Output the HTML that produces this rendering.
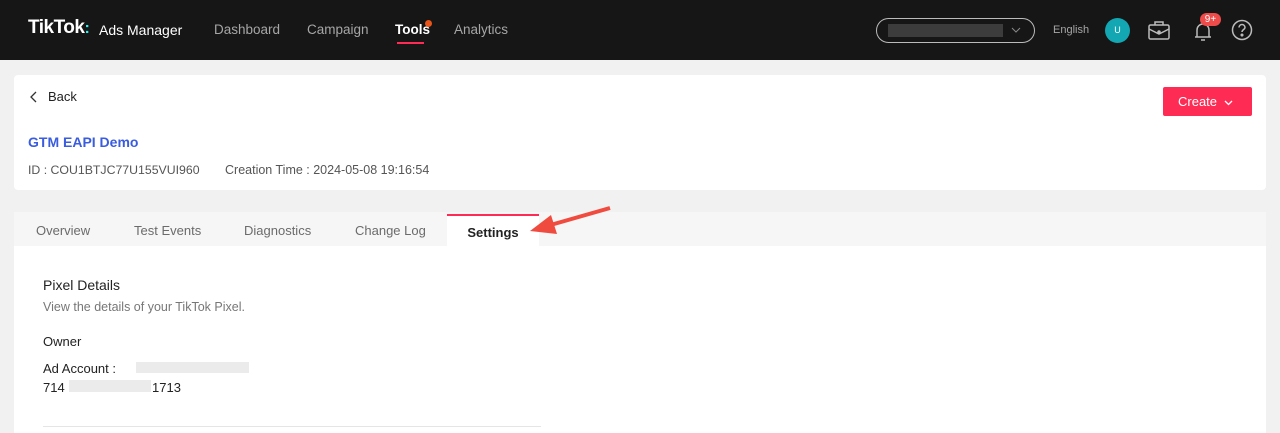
<!DOCTYPE html>
<html><head><meta charset="utf-8"><style>
*{box-sizing:border-box;margin:0;padding:0}
html,body{width:1280px;height:433px;overflow:hidden}
body{background:#f1f1f1;font-family:"Liberation Sans",Arial,sans-serif;position:relative}
.hdr{position:absolute;left:0;top:0;width:1280px;height:60px;background:#161616}
.abs{position:absolute}
.nav{color:#a6a6a6;font-size:13.5px;top:22px}
.card{position:absolute;left:14px;top:75px;width:1252px;height:115px;background:#fff;border-radius:4px}
.tabs{position:absolute;left:14px;top:212px;width:1252px;height:34px;background:#f6f6f6}
.tab{position:absolute;top:11px;font-size:13px;color:#6b6b6b}
.content{position:absolute;left:14px;top:246px;width:1252px;height:187px;background:#fff}
</style></head><body>
<div class="hdr">
 <div class="abs" style="left:28px;top:17px;color:#fff;font-weight:bold;font-size:19px;letter-spacing:-0.5px">TikTok<span style="color:#25f4ee;font-size:16px">:</span></div>
 <div class="abs" style="left:99px;top:22px;color:#fff;font-size:14px">Ads Manager</div>
 <div class="abs nav" style="left:214px">Dashboard</div>
 <div class="abs nav" style="left:307px">Campaign</div>
 <div class="abs nav" style="left:395px;color:#fff;font-weight:bold">Tools</div>
 <div class="abs" style="left:425px;top:20px;width:7px;height:7px;border-radius:50%;background:#e8541a"></div>
 <div class="abs" style="left:397px;top:42px;width:27px;height:2px;background:#fe2c55"></div>
 <div class="abs nav" style="left:454px">Analytics</div>
 <div class="abs" style="left:876px;top:18px;width:159px;height:25px;border:1px solid #bbb;border-radius:13px"></div>
 <div class="abs" style="left:888px;top:24px;width:115px;height:13px;background:#3c3c3c"></div>
 <svg class="abs" style="left:1011px;top:26px" width="10" height="8"><path d="M1 2l4 4 4-4" stroke="#888" fill="none"/></svg>
 <div class="abs" style="left:1053px;top:24px;color:#a6a6a6;font-size:11px">English</div>
 <div class="abs" style="left:1105px;top:18px;width:25px;height:25px;border-radius:50%;background:#12a7b3;color:#fff;font-size:9px;text-align:center;line-height:25px">U</div>
 <svg class="abs" style="left:1148px;top:20px" width="22" height="20" fill="none" stroke="#bbb" stroke-width="1.5"><rect x="1" y="5" width="20" height="14" rx="1.5"/><path d="M7 5V2h8v3M1 9l10 5 10-5"/><circle cx="11" cy="12" r="1" fill="#bbb"/></svg>
 <svg class="abs" style="left:1193px;top:20px" width="20" height="22" fill="none" stroke="#bbb" stroke-width="1.5"><path d="M4 17V10a6 6 0 0112 0v7M2 17h16M8 20h4"/></svg>
 <div class="abs" style="left:1200px;top:13px;width:21px;height:13px;border-radius:7px;background:#f04b4b;color:#fff;font-size:10px;text-align:center;line-height:13px">9+</div>
 <svg class="abs" style="left:1231px;top:19px" width="22" height="22" fill="none" stroke="#bbb" stroke-width="1.5"><circle cx="11" cy="11" r="9.5"/><path d="M8 8.5a3 3 0 116 0c0 2-3 2-3 4.5"/><circle cx="11" cy="16" r=".8" fill="#bbb"/></svg>
</div>
<div class="card">
 <svg class="abs" style="left:16px;top:16px" width="8" height="12"><path d="M6 1L1 6l5 5" stroke="#333" fill="none" stroke-width="1.3"/></svg>
 <div class="abs" style="left:34px;top:14px;font-size:13px;color:#222">Back</div>
 <div class="abs" style="left:1149px;top:12px;width:89px;height:29px;background:#fe2c55;border-radius:2px;color:#fff;font-size:13px;line-height:29px;padding-left:15px">Create <svg width="9" height="6" style="margin-left:3px"><path d="M1 1l3.5 3.5L8 1" stroke="#fff" fill="none" stroke-width="1.3"/></svg></div>
 <div class="abs" style="left:14px;top:59px;font-size:14px;color:#3a5cde;font-weight:bold">GTM EAPI Demo</div>
 <div class="abs" style="left:14px;top:88px;font-size:12.3px;color:#555">ID : COU1BTJC77U155VUI960</div>
 <div class="abs" style="left:211px;top:88px;font-size:12.5px;color:#555">Creation Time : 2024-05-08 19:16:54</div>
</div>
<div class="tabs">
 <div class="tab" style="left:22px">Overview</div>
 <div class="tab" style="left:120px">Test Events</div>
 <div class="tab" style="left:230px">Diagnostics</div>
 <div class="tab" style="left:341px">Change Log</div>
 <div class="abs" style="left:433px;top:2px;width:92px;height:32px;background:#fff;border-top:2px solid #fe2c55;font-size:13px;font-weight:bold;color:#222;text-align:center;padding-top:9px">Settings</div>
</div>
<svg class="abs" style="left:525px;top:204px" width="90" height="36"><path d="M85 4L22 22" stroke="#f04b3f" stroke-width="4"/><path d="M5 27L26 11L32 30Z" fill="#f04b3f"/></svg>
<div class="content">
 <div class="abs" style="left:29px;top:31px;font-size:14px;color:#222">Pixel Details</div>
 <div class="abs" style="left:29px;top:54px;font-size:12.5px;color:#777">View the details of your TikTok Pixel.</div>
 <div class="abs" style="left:29px;top:88px;font-size:13px;color:#222">Owner</div>
 <div class="abs" style="left:29px;top:115px;font-size:13px;color:#222">Ad Account :</div>
 <div class="abs" style="left:122px;top:116px;width:113px;height:11px;background:#ebebeb"></div>
 <div class="abs" style="left:29px;top:134px;font-size:13px;color:#222">714</div>
 <div class="abs" style="left:55px;top:134px;width:82px;height:12px;background:#ebebeb"></div>
 <div class="abs" style="left:138px;top:134px;font-size:13px;color:#222">1713</div>
 <div class="abs" style="left:29px;top:180px;width:498px;height:1px;background:#e5e5e5"></div>
</div>
</body></html>
